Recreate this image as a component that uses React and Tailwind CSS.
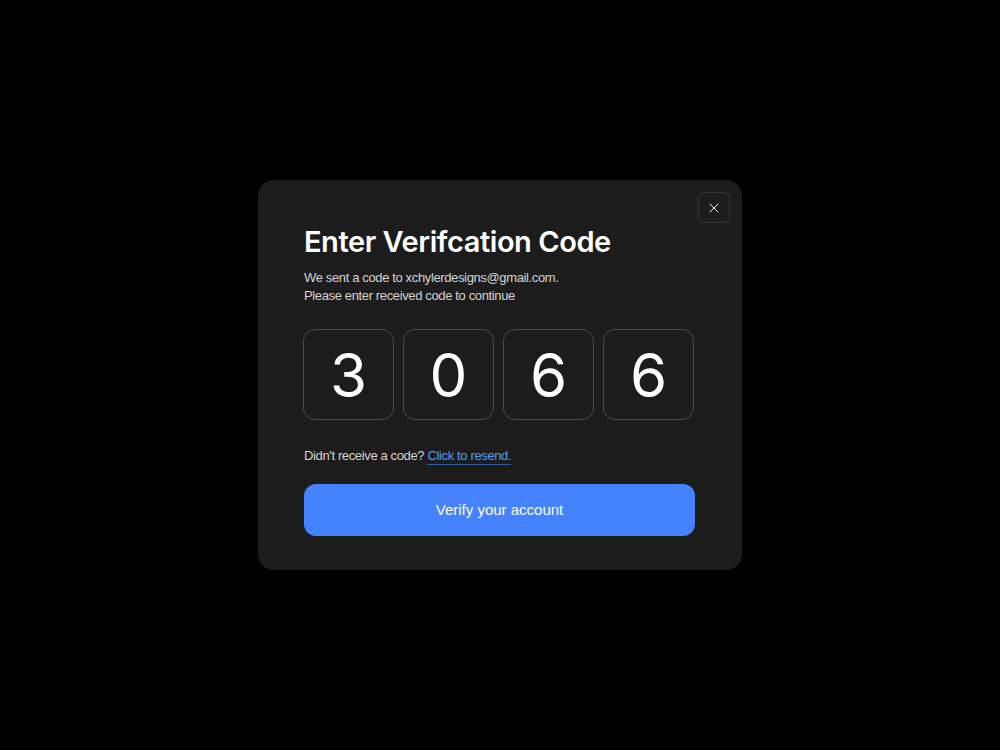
import { X } from 'lucide-react'

export default function App() {
  const code = ['3', '0', '6', '6']

  return (
    <div
      className="w-full h-[750px] bg-black flex items-center justify-center"
      style={{ fontFamily: '"Liberation Sans", Arial, sans-serif' }}
    >
      <div className="relative w-[484px] bg-[#1c1c1c] rounded-2xl pl-[46px] pr-[47px] pt-[45px] pb-[34px]">
        {/* Bouton fermer */}
        <button className="absolute top-3 right-3 w-8 h-[31px] rounded-md border border-[#363636] flex items-center justify-center text-white">
          <X className="w-4 h-4" strokeWidth={1.5} />
        </button>

        <h1 className="font-['Inter'] text-[29px] leading-[34px] font-semibold text-white tracking-[-0.015em]">
          Enter Verifcation Code
        </h1>
        <p className="mt-[10px] text-[13px] leading-[18px] text-[#d4d4d4] tracking-[-0.028em]">
          We sent a code to xchylerdesigns@gmail.com.
          <br />
          Please enter received code to continue
        </p>

        {/* Code */}
        <div className="mt-[24px] flex gap-[9px] -ml-px">
          {code.map((digit, i) => (
            <div
              key={i}
              className="w-[91px] h-[91px] rounded-xl border border-[#4a4a4a] flex items-center justify-center text-white text-[60px] font-['Inter'] font-normal"
            >
              {digit}
            </div>
          ))}
        </div>

        <p className="mt-[27px] text-[13px] leading-[18px] text-[#d4d4d4] tracking-[-0.028em]">
          Didn't receive a code?{' '}
          <a className="text-[#4a9eff] border-b-[1.5px] border-[#2d5ea8] pb-[1px] cursor-pointer">
            Click to resend.
          </a>
        </p>

        <button className="mt-[19px] w-full h-[52px] rounded-xl bg-[#4482ff] text-white text-[15px]">
          Verify your account
        </button>
      </div>
    </div>
  )
}
